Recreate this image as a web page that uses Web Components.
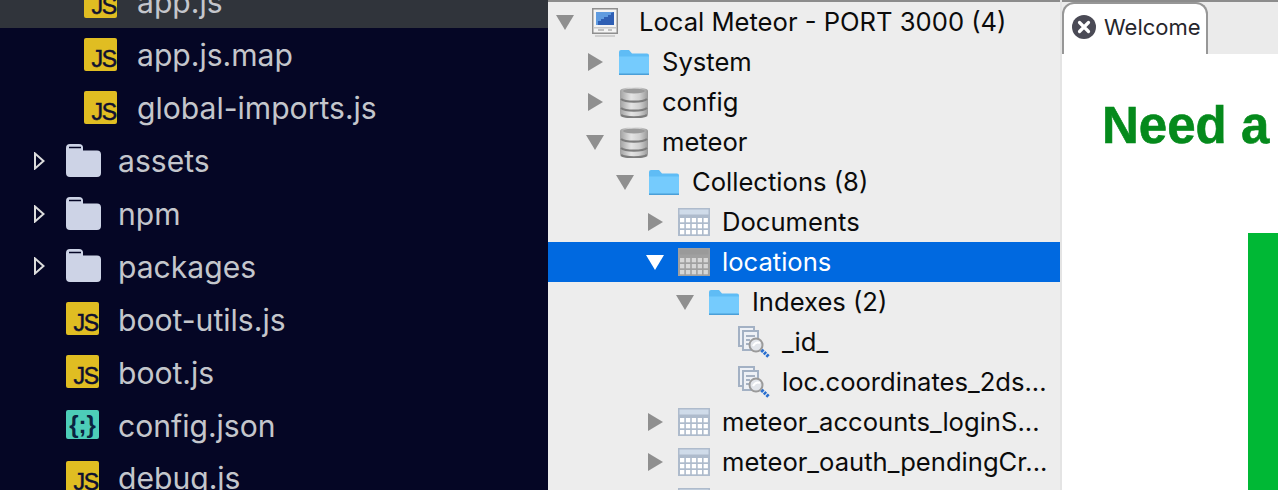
<!DOCTYPE html>
<html>
<head>
<meta charset="utf-8">
<style>
html, body { margin: 0; height: 490px; overflow: hidden; }
</style>
</head>
<body>
<app-shell>
  <file-panel slot="files">
    <file-row icon="js" depth="1" selected>app.js</file-row>
    <file-row icon="js" depth="1">app.js.map</file-row>
    <file-row icon="js" depth="1">global-imports.js</file-row>
    <file-row icon="folder" chevron>assets</file-row>
    <file-row icon="folder" chevron>npm</file-row>
    <file-row icon="folder" chevron>packages</file-row>
    <file-row icon="js">boot-utils.js</file-row>
    <file-row icon="js">boot.js</file-row>
    <file-row icon="json">config.json</file-row>
    <file-row icon="js">debug.js</file-row>
  </file-panel>
  <tree-panel slot="tree">
    <tree-row depth="0" arrow="down" icon="monitor" root>Local Meteor - PORT 3000 (4)</tree-row>
    <tree-row depth="1" arrow="right" icon="folder">System</tree-row>
    <tree-row depth="1" arrow="right" icon="db">config</tree-row>
    <tree-row depth="1" arrow="down" icon="db">meteor</tree-row>
    <tree-row depth="2" arrow="down" icon="folder">Collections (8)</tree-row>
    <tree-row depth="3" arrow="right" icon="table">Documents</tree-row>
    <tree-row depth="3" arrow="down" icon="table" selected>locations</tree-row>
    <tree-row depth="4" arrow="down" icon="folder">Indexes (2)</tree-row>
    <tree-row depth="5" icon="index">_id_</tree-row>
    <tree-row depth="5" icon="index">loc.coordinates_2ds...</tree-row>
    <tree-row depth="3" arrow="right" icon="table">meteor_accounts_loginS...</tree-row>
    <tree-row depth="3" arrow="right" icon="table">meteor_oauth_pendingCr...</tree-row>
    <tree-row depth="3" arrow="right" icon="table"></tree-row>
  </tree-panel>
  <welcome-pane slot="main"></welcome-pane>
</app-shell>

<script>
// shared icon markup, looked up by name
const ICONS = {
  folderFlat: `<svg width="35" height="33" viewBox="0 0 35 33"><path d="M0 4Q0 0 4 0H13Q17 0 17 3.500V6.500H31Q35 6.500 35 10.500V29Q35 33 31 33H4Q0 33 0 29Z" fill="#cdd3e6"/><path d="M3 3.500H15" stroke="#050625" stroke-width="1.500" fill="none"/></svg>`,
  folder: `<svg width="30" height="25" viewBox="0 0 30 25"><path d="M0 2Q0 0 2 0H10L13 3.500H28Q30 3.500 30 5.500V23Q30 25 28 25H2Q0 25 0 23Z" fill="#5fbcf5"/><path d="M0 6.500H30V23Q30 24 28.500 24H1.500Q0 24 0 23Z" fill="#75cbfd"/><rect x="0" y="23.500" width="30" height="1.500" fill="#4b9fd8"/></svg>`,
  db: `<svg width="28" height="31" viewBox="0 0 28 31"><defs><linearGradient id="g" x1="0" x2="1" y1="0" y2="0"><stop offset="0" stop-color="#a0a0a0"/><stop offset=".4" stop-color="#e4e4e4"/><stop offset=".7" stop-color="#d0d0d0"/><stop offset="1" stop-color="#989898"/></linearGradient><filter id="b"><feGaussianBlur stdDeviation=".5"/></filter></defs><g filter="url(#b)"><path d="M0 4C0 -1 28 -1 28 4V27C28 32 0 32 0 27Z" fill="url(#g)"/><ellipse cx="14" cy="4" rx="11" ry="2.500" fill="#9a9a9a"/><path d="M1 12C5 15.500 23 15.500 27 12M1 21C5 24.500 23 24.500 27 21M1 28C5 31 23 31 27 28" stroke="#7c7c7c" stroke-width="2.200" fill="none"/></g></svg>`,
  monitor: `<svg width="26" height="29" viewBox="0 0 26 29"><rect x="0" y="0" width="26" height="26" fill="#8f8f8f"/><rect x="1.500" y="1.500" width="23" height="23" fill="#f4f4f4"/><rect x="4" y="4" width="18" height="13" fill="#2f5fb4"/><path d="M4 17V4H22L19 5V7H16V9H12V11H9V13H6V17Z" fill="#5f9be0"/><rect x="1.500" y="19" width="23" height="1.500" fill="#c8c8c8"/><path d="M6 22H12M16 22H20" stroke="#b0b0b0" stroke-width="1.500"/><rect x="3" y="27" width="20" height="2" fill="#cfcfcf"/></svg>`,
  index: `<svg width="32" height="32" viewBox="0 0 32 32"><rect x="1" y="1" width="15" height="19" fill="#eef1f6" stroke="#a3b1c4" stroke-width="2"/><rect x="5" y="5" width="15" height="19" fill="#eef1f6" stroke="#a3b1c4" stroke-width="2"/><path d="M8 10H17M8 14H12M8 18H12" stroke="#8f9db2" stroke-width="1.500"/><circle cx="18" cy="19" r="6.500" fill="#e2e5ea" stroke="#9a9a9a" stroke-width="2"/><path d="M15 20Q18 15 22 17" stroke="#fff" stroke-width="2" fill="none"/><path d="M23.500 24L31 31" stroke="#2a6fd0" stroke-width="3.500" stroke-dasharray="2.500 1"/></svg>`
}
// table icon goes grey when the row is selected
function tableIcon(dim) {
  const head = dim ? '#9a9a9a' : '#cfdbe9'
  const frame = dim ? '#a0a0a0' : '#aebbcc'
  const cell = dim ? '#d6d6d6' : '#ffffff'
  let cells = ''
  for (let r = 0; r < 3; r++) {
    for (let c = 0; c < 5; c++) {
      cells += `<rect x="${2 + c * 5.900}" y="${10 + r * 6}" width="4.300" height="4.300" fill="${cell}"/>`
    }
  }
  return `<svg width="32" height="28" viewBox="0 0 32 28"><rect width="32" height="28" fill="${frame}"/><rect x="1.500" y="1.500" width="29" height="5" fill="${head}"/>${cells}</svg>`
}

class AppShell extends HTMLElement {
  constructor() {
    super()
    this.attachShadow({ mode: 'open' }).innerHTML = `
      <style>
      :host { display: grid; grid-template-columns: 548px 512px 1fr; width: 1278px; height: 490px; overflow: hidden; }
      </style>
      <slot name="files"></slot><slot name="tree"></slot><slot name="main"></slot>`
  }
}

class FilePanel extends HTMLElement {
  constructor() {
    super()
    this.attachShadow({ mode: 'open' }).innerHTML = `
      <style>
      :host { display: block; height: 490px; overflow: hidden; background: #050625; }
      .list { margin-top: -25px; }
      </style>
      <div class="list"><slot></slot></div>`
  }
}

class FileRow extends HTMLElement {
  constructor() {
    super()
    const depth = Number(this.getAttribute('depth') || 0)
    const icon = this.getAttribute('icon')
    let glyph = ''
    if (icon == 'js') glyph = '<span class="badge js">JS</span>'
    if (icon == 'json') glyph = '<span class="badge json">{;}</span>'
    if (icon == 'folder') glyph = ICONS.folderFlat
    const chev = this.hasAttribute('chevron')
      ? '<svg class="chev" width="11" height="18" viewBox="0 0 11 18"><path d="M1 1.500L9.500 9L1 16.500Z" fill="none" stroke="#dcdcdc" stroke-width="2"/></svg>'
      : ''
    this.attachShadow({ mode: 'open' }).innerHTML = `
      <style>
      :host { display: flex; align-items: center; height: 52.9px; padding-left: ${66 + depth * 18}px; position: relative;
        font: 400 30.100px Inter, sans-serif; color: #c4c6cc; }
      :host([selected]) { background: #30343b; }
      .slot { width: ${depth ? 53 : 52}px; flex: none; display: flex; align-items: center; }
      .label { margin-top: 2px; }
      svg { display: block; }
      .chev { position: absolute; left: 34px; top: 18px; }
      .badge { box-sizing: border-box; width: 33px; height: 33px; border-radius: 2px; display: flex; justify-content: flex-end; align-items: flex-end; }
      .js { background: #e0bd22; color: #0d0f30; font: 400 23px/1 "Liberation Sans", sans-serif; padding: 0 1px 0 0; letter-spacing: -1.200px; -webkit-text-stroke: .5px #0d0f30; }
      .json { background: #4dcdb8; color: #0a2240; font: 700 24px/1 "Liberation Sans", sans-serif; height: 29px; justify-content: center; align-items: center; }
      </style>
      ${chev}<span class="slot">${glyph}</span><span class="label"><slot></slot></span>`
  }
}

class TreePanel extends HTMLElement {
  constructor() {
    super()
    this.attachShadow({ mode: 'open' }).innerHTML = `
      <style>
      :host { display: block; height: 490px; overflow: hidden; background: #ededed; border-top: 2px solid #8c8c8c; box-sizing: border-box; }
      </style>
      <slot></slot>`
  }
}

class TreeRow extends HTMLElement {
  constructor() {
    super()
    const depth = Number(this.getAttribute('depth') || 0)
    const arrow = this.getAttribute('arrow')
    const sel = this.hasAttribute('selected')
    const icon = this.getAttribute('icon')
    const fill = sel ? '#ffffff' : '#8f8f8f'
    let arrowSvg = ''
    if (arrow == 'down') arrowSvg = `<svg width="18" height="15" viewBox="0 0 18 15"><path d="M0 0H18L9 15Z" fill="${fill}"/></svg>`
    if (arrow == 'right') arrowSvg = `<svg width="15" height="18" viewBox="0 0 15 18"><path d="M0 0L15 9L0 18Z" fill="${fill}"/></svg>`
    const glyph = icon == 'table' ? tableIcon(sel) : ICONS[icon]
    this.attachShadow({ mode: 'open' }).innerHTML = `
      <style>
      :host { display: flex; align-items: center; height: 40px; box-sizing: border-box; padding-left: ${8 + depth * 30}px;
        font: 400 25.600px Inter, sans-serif; color: #0b0b0b; white-space: nowrap; }
      :host([selected]) { background: #0069e0; color: #fff; }
      .arrow { width: 18px; flex: none; display: flex; justify-content: center; }
      .icon { width: 32px; margin-left: 14px; flex: none; display: flex; justify-content: center; }
      .text { margin-left: 12px; margin-bottom: 2px; }
      :host([root]) .icon { width: 26px; margin-left: 18px; }
      :host([root]) .text { margin-left: 21px; }
      svg { display: block; }
      </style>
      <span class="arrow">${arrowSvg}</span><span class="icon">${glyph}</span><span class="text"><slot></slot></span>`
  }
}

class WelcomePane extends HTMLElement {
  constructor() {
    super()
    this.attachShadow({ mode: 'open' }).innerHTML = `
      <style>
      :host { display: flex; flex-direction: column; height: 490px; overflow: hidden; border-left: 2px solid #e4e4e4; box-sizing: border-box; background: #fff; }
      .bar { height: 54px; flex: none; background: #ebebeb; border-top: 2px solid #8c8c8c; box-sizing: border-box; display: flex; align-items: flex-end; }
      .tab { box-sizing: border-box; width: 146px; height: 52px; background: #fff; border: 2px solid #979797; border-bottom: 0; border-radius: 12px 12px 0 0;
        display: flex; align-items: center; gap: 8px; padding: 0 0 5px 8px; font: 400 22px Inter, sans-serif; color: #26262c; }
      .body { flex: 1; padding: 41px 0 0 40px; white-space: nowrap; }
      h1 { margin: 0; font: 700 51px/1.2 "Liberation Sans", sans-serif; color: #058a1c; -webkit-text-stroke: .6px #058a1c; }
      .block { width: 40px; height: 300px; margin: 77px 0 0 146px; background: #00b835; }
      svg { display: block; flex: none; }
      </style>
      <div class="bar"><div class="tab">
        <svg width="24" height="24" viewBox="0 0 24 24"><circle cx="12" cy="12" r="12" fill="#4a4a55"/><path d="M7.500 7.500L16.500 16.500M16.500 7.500L7.500 16.500" stroke="#fff" stroke-width="3.200" stroke-linecap="round"/></svg>
        <span>Welcome</span>
      </div></div>
      <div class="body"><h1>Need a</h1><div class="block"></div></div>`
  }
}

customElements.define('app-shell', AppShell)
customElements.define('file-panel', FilePanel)
customElements.define('file-row', FileRow)
customElements.define('tree-panel', TreePanel)
customElements.define('tree-row', TreeRow)
customElements.define('welcome-pane', WelcomePane)
</script>
</body>
</html>
